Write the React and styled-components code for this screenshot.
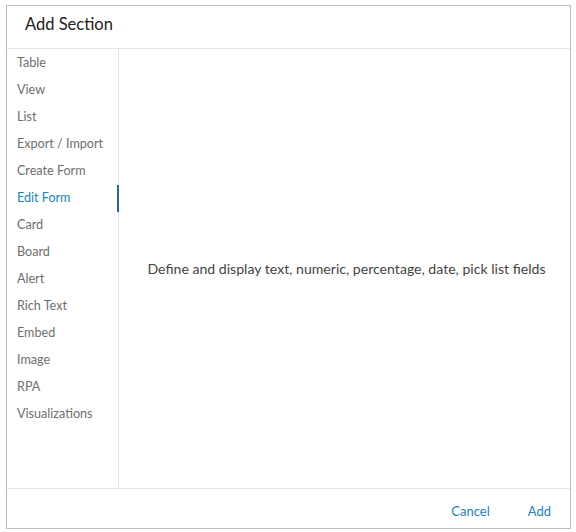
import styled, { createGlobalStyle } from 'styled-components'

const GlobalStyle = createGlobalStyle`
    body {
        margin: 0;
        font-family: Lato, "Open Sans", sans-serif;
        background: #fff;
    }
`

const sections = [
    'Table', 'View', 'List', 'Export / Import', 'Create Form', 'Edit Form', 'Card',
    'Board', 'Alert', 'Rich Text', 'Embed', 'Image', 'RPA', 'Visualizations',
]

const Page = styled.div`
    padding: 5px 6px 4px 6px;
`

const Dialog = styled.div`
    box-sizing: border-box;
    width: 565px;
    height: 524px;
    border: 1px solid #bdbdbd;
    display: flex;
    flex-direction: column;
    background: #fff;
`

const Header = styled.div`
    height: 43px;
    box-sizing: border-box;
    padding: 7px 0 0 18px;
    border-bottom: 1px solid #e6e6e6;
    font-size: 16.5px;
    line-height: 22px;
    color: #222;
`

const Body = styled.div`
    flex: 1;
    display: flex;
    min-height: 0;
`

const Sidebar = styled.ul`
    list-style: none;
    margin: 0;
    padding: 3px 0 0 0;
    width: 111px;
    border-right: 1px solid #e6e6e6;
`

const Item = styled.li`
    height: 27px;
    line-height: 22px;
    padding-left: 10px;
    font-size: 12.6px;
    color: ${p => (p.$active ? '#1b7fc0' : '#6e6e6e')};
    position: relative;
    cursor: pointer;
    white-space: nowrap;

    &::after {
        content: '';
        display: ${p => (p.$active ? 'block' : 'none')};
        position: absolute;
        right: -1px;
        top: -2px;
        bottom: 2px;
        width: 2px;
        background: #2466a8;
    }
`

const Content = styled.div`
    flex: 1;
    display: flex;
    align-items: center;
    justify-content: center;
    font-size: 14.1px;
    color: #444;
    padding-left: 4px;
`

const Footer = styled.div`
    height: 40px;
    border-top: 1px solid #e6e6e6;
    display: flex;
    align-items: center;
    justify-content: flex-end;
    gap: 38px;
    padding: 4px 19px 0 0;
    box-sizing: border-box;
`

const TextButton = styled.button`
    border: none;
    background: none;
    padding: 0;
    font: inherit;
    font-size: 13px;
    color: #1b7fc0;
    cursor: pointer;
`

export default function App() {
    const active = 'Edit Form'

    return (
        <>
            <GlobalStyle />
            <Page>
                <Dialog>
                    <Header>Add Section</Header>
                    <Body>
                        <Sidebar>
                            {sections.map(s => (
                                <Item key={s} $active={s === active}>{s}</Item>
                            ))}
                        </Sidebar>
                        <Content>
                            Define and display text, numeric, percentage, date, pick list fields
                        </Content>
                    </Body>
                    <Footer>
                        <TextButton>Cancel</TextButton>
                        <TextButton>Add</TextButton>
                    </Footer>
                </Dialog>
            </Page>
        </>
    )
}
